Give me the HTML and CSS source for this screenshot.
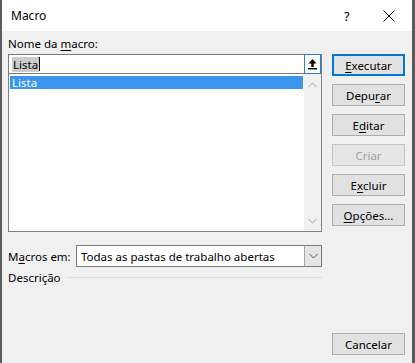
FILE: index.html
```html
<!DOCTYPE html>
<html>
<head>
<meta charset="utf-8">
<link rel="stylesheet" href="styles.css">
</head>
<body>
<div class="window">
  <div class="titlebar">
    <span class="title">Macro</span>
    <span class="help">?</span>
    <span class="close">
      <svg width="12" height="12" viewBox="0 0 12 12"><path d="M0.5 0.5 L11.5 11.5 M11.5 0.5 L0.5 11.5" stroke="#000" stroke-width="1" fill="none"/></svg>
    </span>
  </div>
  <div class="content">
    <div class="left">
      <div class="label">Nome da <u>m</u>acro:</div>
      <div class="namebox">
        <span class="sel">Lista</span><span class="caret"></span>
        <span class="upbtn">
          <svg width="11" height="12" viewBox="0 0 11 12"><path d="M5.5 1 L1.5 5.5 H4.3 V9 H6.7 V5.5 H9.5 Z" fill="#000"/><rect x="1" y="10" width="9" height="1.4" fill="#000"/></svg>
        </span>
      </div>
      <div class="listbox">
        <div class="items">
          <div class="item selected">Lista</div>
        </div>
        <div class="scroll">
          <svg width="9" height="6" viewBox="0 0 9 6"><path d="M0.5 5 L4.5 1 L8.5 5" stroke="#c2c2c2" stroke-width="1.2" fill="none"/></svg>
          <svg width="9" height="6" viewBox="0 0 9 6"><path d="M0.5 1 L4.5 5 L8.5 1" stroke="#c2c2c2" stroke-width="1.2" fill="none"/></svg>
        </div>
      </div>
      <div class="macrosrow">
        <span class="mlabel">M<u>a</u>cros em:</span>
        <div class="select">
          <span class="selval">Todas as pastas de trabalho abertas</span>
          <span class="drop">
            <svg width="9" height="6" viewBox="0 0 9 6"><path d="M0.5 1 L4.5 5 L8.5 1" stroke="#555" stroke-width="1" fill="none"/></svg>
          </span>
        </div>
      </div>
      <div class="descrow">
        <span>Descrição</span>
        <span class="line"></span>
      </div>
    </div>
    <div class="right">
      <div class="btn default"><u>E</u>xecutar</div>
      <div class="btn">Depu<u>r</u>ar</div>
      <div class="btn">E<u>d</u>itar</div>
      <div class="btn disabled">Criar</div>
      <div class="btn">E<u>x</u>cluir</div>
      <div class="btn"><u>O</u>pções...</div>
      <div class="btn cancel">Cancelar</div>
    </div>
  </div>
</div>
</body>
</html>
```
FILE: styles.css
```css
html, body {
  margin: 0;
  padding: 0;
}
body {
  font-family: "Noto Sans", "Open Sans", sans-serif;
  font-size: 11.5px;
  color: #000;
  background: #5b5b5b;
}
u { text-decoration: underline; text-underline-offset: 2px; }
.window {
  width: 410px;
  height: 363px;
  margin-left: 2px;
  display: flex;
  flex-direction: column;
  background: #f0f0f0;
}
.titlebar {
  height: 31px;
  background: #fff;
  display: flex;
  align-items: center;
  padding-left: 9px;
  font-size: 12px;
}
.title { flex: 1; }
.help {
  width: 10px;
  margin-right: 29px;
  font-size: 13px;
}
.close {
  width: 12px;
  height: 12px;
  margin-right: 17px;
  display: flex;
}
.content {
  flex: 1;
  display: flex;
  padding: 5px 6px 8px 6px;
  gap: 10px;
}
.left {
  width: 314px;
  display: flex;
  flex-direction: column;
}
.label {
  height: 16px;
  line-height: 16px;
  margin-bottom: 2px;
}
.namebox {
  height: 18px;
  border: 1px solid #7a7a7a;
  background: #fff;
  display: flex;
  align-items: center;
  padding-left: 3px;
  position: relative;
}
.sel {
  background: #cccccc;
  line-height: 15px;
  padding: 0 1px;
}
.caret {
  width: 1px;
  height: 14px;
  background: #000;
}
.upbtn {
  margin-left: auto;
  width: 17px;
  height: 18px;
  border: 1px solid #2f7bd0;
  background: #fff;
  display: flex;
  align-items: center;
  justify-content: center;
  margin-right: 0;
  box-sizing: border-box;
  margin-top: -1px;
  height: 20px;
}
.listbox {
  height: 157px;
  border: 1px solid #828282;
  border-top: none;
  background: #fff;
  display: flex;
}
.items {
  flex: 1;
  padding: 2px 1px 0 1px;
}
.item {
  height: 13px;
  line-height: 13px;
  padding-left: 2px;
}
.item.selected {
  background: #3b96ef;
  color: #fff;
}
.scroll {
  width: 17px;
  background: #f0f0f0;
  display: flex;
  flex-direction: column;
  justify-content: space-between;
  align-items: center;
  padding: 8px 0 7px;
}
.macrosrow {
  margin-top: 13px;
  display: flex;
  align-items: center;
}
.mlabel { width: 68px; }
.select {
  flex: 1;
  height: 20px;
  border: 1px solid #7a7a7a;
  background: #fff;
  display: flex;
  align-items: center;
}
.selval { flex: 1; padding-left: 4px; }
.drop {
  width: 16px;
  height: 20px;
  background: #e5e5e5;
  border-left: 1px solid #a8a8a8;
  display: flex;
  align-items: center;
  justify-content: center;
}
.descrow {
  margin-top: 2px;
  display: flex;
  align-items: center;
  gap: 6px;
  height: 16px;
}
.line {
  flex: 1;
  height: 1px;
  background: #dcdcdc;
}
.right {
  width: 73px;
  display: flex;
  flex-direction: column;
  gap: 8px;
  padding-top: 18px;
}
.btn {
  height: 20px;
  border: 1px solid #adadad;
  background: #e1e1e1;
  display: flex;
  align-items: center;
  justify-content: center;
}
.btn.default {
  border: 2px solid #0078d7;
  height: 18px;
}
.btn.disabled {
  color: #a0a0a0;
  border-color: #c4c4c4;
  background: #e6e6e6;
}
.btn.cancel { margin-top: auto; }
```
